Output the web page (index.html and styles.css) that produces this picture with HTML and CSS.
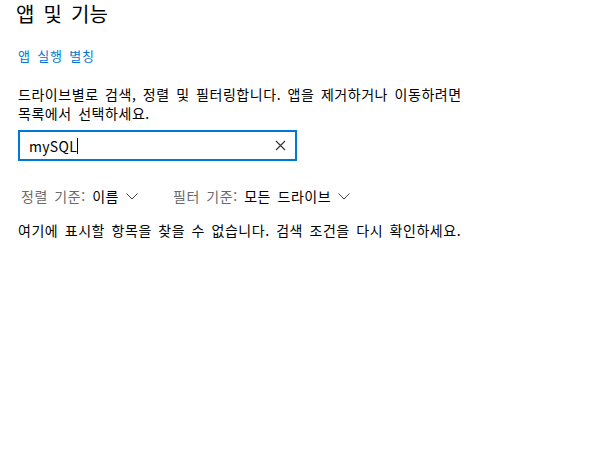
FILE: index.html
```html
<!DOCTYPE html>
<html lang="ko">
<head>
<meta charset="utf-8">
<link rel="stylesheet" href="styles.css">
</head>
<body>
<div class="page">
  <h1 class="title">앱 및 기능</h1>
  <a class="link" href="#">앱 실행 별칭</a>
  <p class="desc">드라이브별로 검색, 정렬 및 필터링합니다. 앱을 제거하거나 이동하려면<br>목록에서 선택하세요.</p>
  <div class="search">
    <span class="search-text">mySQL<span class="caret"></span></span>
    <svg class="clear" width="11" height="11" viewBox="0 0 11 11"><path d="M1 1L10 10M10 1L1 10" stroke="#333" stroke-width="1.1" fill="none"/></svg>
  </div>
  <div class="filters">
    <div class="filter"><span class="label">정렬 기준:&nbsp;</span><span class="value">이름</span>
      <svg class="chev" width="12" height="7" viewBox="0 0 12 7"><path d="M0.5 0.5L6 6L11.5 0.5" stroke="#444" stroke-width="1" fill="none"/></svg></div>
    <div class="filter"><span class="label">필터 기준:&nbsp;</span><span class="value">모든 드라이브</span>
      <svg class="chev" width="12" height="7" viewBox="0 0 12 7"><path d="M0.5 0.5L6 6L11.5 0.5" stroke="#444" stroke-width="1" fill="none"/></svg></div>
  </div>
  <p class="message">여기에 표시할 항목을 찾을 수 없습니다. 검색 조건을 다시 확인하세요.</p>
</div>
</body>
</html>
```
FILE: styles.css
```css
html, body {
  margin: 0;
  padding: 0;
  background: #fff;
}
body {
  font-family: "Noto Sans CJK KR", "Noto Sans", sans-serif;
  color: #000;
}
.page {
  padding: 0 0 0 18px;
  display: flex;
  flex-direction: column;
  align-items: flex-start;
}
.title {
  margin: 0;
  font-size: 20px;
  font-weight: 400;
  line-height: 28px;
  letter-spacing: 0;
  word-spacing: 3.5px;
  margin-left: -2px;
}
.link {
  margin-top: 19px;
  font-size: 13px;
  line-height: 18px;
  color: #0078d4;
  text-decoration: none;
  letter-spacing: 0.8px;
  word-spacing: 2px;
}
.desc {
  margin: 20px 0 0;
  font-size: 14px;
  line-height: 19px;
  letter-spacing: 0.55px;
  word-spacing: 2px;
}
.search {
  margin-top: 7px;
  height: 27px;
  border: 2px solid #0078d7;
  display: flex;
  align-items: center;
  justify-content: space-between;
  padding: 0 9px 0 9px;
  box-sizing: content-box;
  width: 257px;
}
.search-text {
  font-size: 14px;
  display: flex;
  align-items: center;
  letter-spacing: 0.3px;
}
.caret {
  display: inline-block;
  width: 1px;
  height: 16px;
  background: #000;
  margin-left: 0;
}
.clear {
  display: block;
}
.filters {
  display: flex;
  margin-top: 26px;
  padding-left: 3px;
}
.filter {
  font-size: 14px;
  line-height: 19px;
  display: flex;
  align-items: center;
  white-space: pre;
  letter-spacing: 0.55px;
  word-spacing: 2px;
}
.filter + .filter {
  margin-left: 35px;
}
.label {
  color: #6b6b6b;
}
.value {
  color: #000;
}
.chev {
  margin-left: 7px;
  display: block;
}
.message {
  margin: 15px 0 0;
  font-size: 14px;
  line-height: 19px;
  letter-spacing: 0.55px;
  word-spacing: 2px;
}
```
